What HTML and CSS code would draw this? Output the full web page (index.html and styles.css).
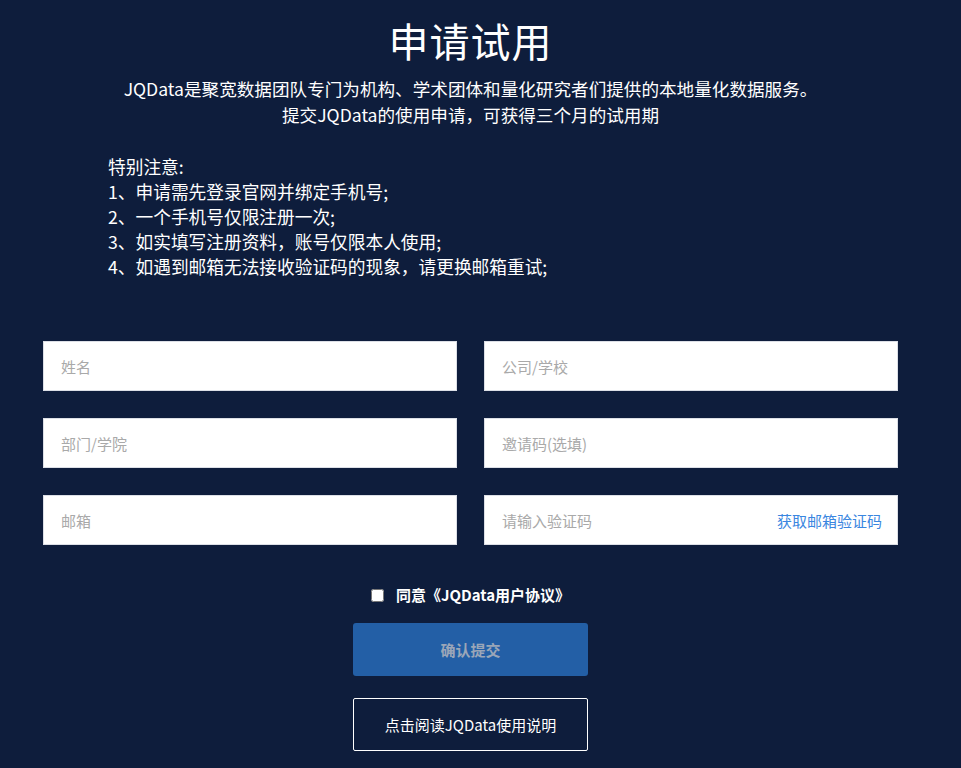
FILE: index.html
```html
<!DOCTYPE html>
<html lang="zh-CN">
<head>
<meta charset="utf-8">
<title>申请试用</title>
<link rel="stylesheet" href="styles.css">
</head>
<body>
<div class="page">
  <h1 class="title">申请试用</h1>
  <p class="intro">JQData是聚宽数据团队专门为机构、学术团体和量化研究者们提供的本地量化数据服务。<br>提交JQData的使用申请，可获得三个月的试用期</p>
  <div class="notes">
    <div>特别注意:</div>
    <div>1、申请需先登录官网并绑定手机号;</div>
    <div>2、一个手机号仅限注册一次;</div>
    <div>3、如实填写注册资料，账号仅限本人使用;</div>
    <div>4、如遇到邮箱无法接收验证码的现象，请更换邮箱重试;</div>
  </div>
  <form class="form">
    <div class="field"><input type="text" placeholder="姓名"></div>
    <div class="field"><input type="text" placeholder="公司/学校"></div>
    <div class="field"><input type="text" placeholder="部门/学院"></div>
    <div class="field"><input type="text" placeholder="邀请码(选填)"></div>
    <div class="field"><input type="text" placeholder="邮箱"></div>
    <div class="field code"><input type="text" placeholder="请输入验证码"><span class="get-code">获取邮箱验证码</span></div>
  </form>
  <label class="agree"><input type="checkbox"><span>同意《JQData用户协议》</span></label>
  <div class="actions">
    <button class="btn submit" type="button">确认提交</button>
    <button class="btn guide" type="button">点击阅读JQData使用说明</button>
  </div>
</div>
</body>
</html>
```

FILE: styles.css
```css
html, body {
  margin: 0;
  padding: 0;
  background: #0e1d3c;
}
body {
  font-family: "Noto Sans CJK SC", "Noto Sans", sans-serif;
  color: #ffffff;
}
.page {
  width: 941px;
  display: flex;
  flex-direction: column;
  align-items: center;
}
.title {
  margin: 14px 0 0;
  font-size: 40px;
  font-weight: 400;
  line-height: 52px;
  letter-spacing: 1px;
}
.intro {
  margin: 10px 0 0;
  font-size: 17.6px;
  line-height: 26px;
  text-align: center;
}
.notes {
  align-self: flex-start;
  margin: 26px 0 0 108px;
  font-size: 17.7px;
  line-height: 25px;
}
.form {
  margin-top: 62px;
  width: 855px;
  display: grid;
  grid-template-columns: 1fr 1fr;
  column-gap: 27px;
  row-gap: 27px;
}
.field {
  height: 50px;
  background: #fff;
  border: 1px solid #dcdfe6;
  box-sizing: border-box;
  display: flex;
  align-items: center;
}
.field input {
  flex: 1;
  min-width: 0;
  height: 100%;
  border: 0;
  outline: none;
  padding: 0 17px;
  font-family: inherit;
  font-size: 15px;
  color: #333;
  background: transparent;
}
.field input::placeholder {
  color: #a9a9a9;
}
.get-code {
  font-size: 15px;
  color: #3a86e0;
  padding-right: 15px;
  white-space: nowrap;
}
.agree {
  margin-top: 40px;
  display: flex;
  align-items: center;
  gap: 12px;
  font-size: 15px;
  font-weight: 700;
  line-height: 20px;
}
.agree input {
  width: 13px;
  height: 13px;
  margin: 0;
}
.actions {
  margin-top: 18px;
  display: flex;
  flex-direction: column;
  gap: 22px;
}
.btn {
  width: 235px;
  height: 53px;
  font-family: inherit;
  font-size: 15px;
  border-radius: 3px;
}
.submit {
  background: #235fa6;
  border: 0;
  color: #9aa6b8;
  font-weight: 700;
}
.guide {
  background: transparent;
  border: 1px solid #ffffff;
  color: #ffffff;
  border-radius: 2px;
}
```
